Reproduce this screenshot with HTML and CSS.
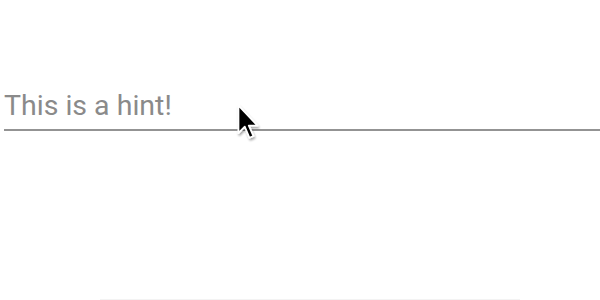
FILE: index.html
```html
<!DOCTYPE html>
<html>
<head>
<meta charset="utf-8">
<link rel="stylesheet" href="styles.css">
</head>
<body>
<div class="page">
  <div class="field">
    <div class="hint">This is a hint!</div>
    <div class="underline"></div>
  </div>
  <div class="footer-line"></div>
</div>
<svg class="cursor" width="28" height="44" viewBox="0 0 24 38">
  <defs>
    <filter id="sh" x="-30%" y="-30%" width="160%" height="160%">
      <feGaussianBlur in="SourceAlpha" stdDeviation="1"/>
      <feOffset dx="1" dy="1.5"/>
      <feComponentTransfer><feFuncA type="linear" slope="0.35"/></feComponentTransfer>
      <feMerge><feMergeNode/><feMergeNode in="SourceGraphic"/></feMerge>
    </filter>
  </defs>
  <path filter="url(#sh)" d="M2 2 L2 26 L7.5 20.5 L11.5 30 L15 28.5 L11 19.5 L18.5 19.5 Z" fill="#000" stroke="#fff" stroke-width="1.6" stroke-linejoin="round"/>
</svg>
</body>
</html>
```

FILE: styles.css
```css
html, body {
  margin: 0;
  padding: 0;
  background: #fff;
}
.page {
  width: 600px;
  height: 300px;
  position: relative;
  overflow: hidden;
  display: flex;
  flex-direction: column;
}
.field {
  margin-top: 90px;
  padding-left: 4px;
}
.hint {
  font-family: Roboto, "Noto Sans", sans-serif;
  font-size: 28.5px;
  line-height: 32px;
  color: #8a8a8a;
  height: 32px;
}
.underline {
  margin-top: 7px;
  height: 2px;
  background: #939393;
}
.footer-line {
  margin-top: auto;
  margin-left: 100px;
  width: 420px;
  height: 1px;
  background: #f3f3f3;
}
.cursor {
  position: absolute;
  left: 236px;
  top: 103px;
}
```
